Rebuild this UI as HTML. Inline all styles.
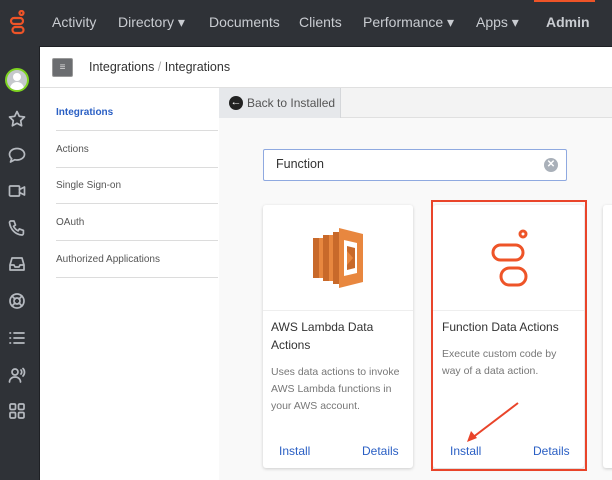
<!DOCTYPE html>
<html><head><meta charset="utf-8"><style>
*{margin:0;padding:0;box-sizing:border-box}
body{width:612px;height:480px;overflow:hidden;background:#2f3237;font-family:"Liberation Sans",sans-serif;position:relative}
.a{position:absolute}
.nav{color:#c9ccd1;font-size:14px;top:14px}
.rail svg{position:absolute;left:8px;width:18px;height:18px;fill:none;stroke:#b6bac0;stroke-width:1.7;stroke-linecap:round;stroke-linejoin:round}
.ln{position:absolute;left:56px;font-size:10px;color:#555}
.dv{position:absolute;left:56px;width:162px;height:1px;background:#dcdcdc}
.card{position:absolute;background:#fff;border-radius:3px;box-shadow:0 1px 3px rgba(0,0,0,.18)}
.t{position:absolute;font-size:12px;color:#333;line-height:18px}
.d{position:absolute;font-size:10.5px;color:#777;line-height:17px}
.lk{position:absolute;font-size:12px;color:#2a5fc4}
</style></head><body>
<!-- top bar -->
<svg class="a" style="left:9px;top:10px" width="16" height="26" viewBox="0 0 16 26"><g fill="none" stroke="#ee5428" stroke-width="2.2"><circle cx="12.5" cy="3" r="2"/><rect x="2" y="8" width="12" height="6" rx="3"/><rect x="3.5" y="17" width="11" height="6" rx="3"/></g></svg>
<div class="a nav" style="left:52px">Activity</div>
<div class="a nav" style="left:118px">Directory ▾</div>
<div class="a nav" style="left:209px">Documents</div>
<div class="a nav" style="left:299px">Clients</div>
<div class="a nav" style="left:363px">Performance ▾</div>
<div class="a nav" style="left:476px">Apps ▾</div>
<div class="a nav" style="left:546px;font-weight:bold">Admin</div>
<div class="a" style="left:534px;top:0;width:61px;height:2px;background:#ee5428"></div>
<!-- rail -->
<div class="a" style="left:5px;top:68px;width:24px;height:24px;border-radius:50%;border:2.5px solid #7ed321;background:#c5c8cc;overflow:hidden"><div class="a" style="left:6px;top:3px;width:8px;height:8px;border-radius:50%;background:#fff"></div><div class="a" style="left:3px;top:12px;width:14px;height:10px;border-radius:7px 7px 0 0;background:#fff"></div></div>
<div class="rail">
<svg style="top:110px" viewBox="0 0 18 18"><path d="M9 1.5l2.3 4.8 5.2.7-3.8 3.6.9 5.2L9 13.3l-4.6 2.5.9-5.2L1.5 7l5.2-.7z"/></svg>
<svg style="top:146px" viewBox="0 0 18 18"><path d="M9 2.5c4.2 0 7.5 2.6 7.5 5.8S13.2 14 9 14c-.8 0-1.6-.1-2.3-.3L2.5 16l1.2-3.3C2.3 11.6 1.5 10 1.5 8.3 1.5 5.1 4.8 2.5 9 2.5z"/></svg>
<svg style="top:182px" viewBox="0 0 18 18"><rect x="1.5" y="4" width="10" height="10" rx="1"/><path d="M11.5 7.5l5-2.5v8l-5-2.5"/></svg>
<svg style="top:219px" viewBox="0 0 18 18"><path d="M3 2h3l1.5 4-2 1.3c1 2 2.6 3.6 4.6 4.6l1.3-2 4 1.5v3c0 .8-.7 1.6-1.5 1.6C7.5 15.6 2.4 10.5 1.5 3.5 1.5 2.7 2.2 2 3 2z"/></svg>
<svg style="top:255px" viewBox="0 0 18 18"><path d="M2 10l2-7h10l2 7v5H2z M2 10h4l1 2h4l1-2h4"/></svg>
<svg style="top:292px" viewBox="0 0 18 18"><circle cx="9" cy="9" r="7"/><circle cx="9" cy="9" r="3"/><path d="M4 4l3 3M14 4l-3 3M4 14l3-3M14 14l-3-3"/></svg>
<svg style="top:329px" viewBox="0 0 18 18"><path d="M6 4h10M6 9h10M6 14h10M2 4h.5M2 9h.5M2 14h.5"/></svg>
<svg style="top:366px" viewBox="0 0 18 18"><circle cx="7" cy="6" r="3"/><path d="M1.5 16c0-3 2.5-5 5.5-5s5.5 2 5.5 5M13 4c1 1 1 3 0 4M15 2.5c2 2 2 5.5 0 7.5"/></svg>
<svg style="top:402px" viewBox="0 0 18 18"><rect x="2" y="2" width="5.5" height="5.5" rx="1.2"/><rect x="10.5" y="2" width="5.5" height="5.5" rx="1.2"/><rect x="2" y="10.5" width="5.5" height="5.5" rx="1.2"/><rect x="10.5" y="10.5" width="5.5" height="5.5" rx="1.2"/></svg>
</div>
<!-- main -->
<div class="a" style="left:39px;top:46px;width:573px;height:434px;background:#fff;border-top:1px solid #1e2024;border-left:1px solid #1e2024"></div>
<div class="a" style="left:52px;top:58px;width:21px;height:19px;background:#6b6d70;border:1px solid #999;border-radius:2px;color:#ddd;font-size:10px;text-align:center;line-height:17px">≡</div>
<div class="a" style="left:89px;top:60px;font-size:12.5px;color:#333">Integrations <span style="color:#aaa">/</span> Integrations</div>
<div class="a" style="left:40px;top:87px;width:572px;height:1px;background:#e0e0e0"></div>
<!-- left nav -->
<div class="ln" style="top:107px;color:#2a5fc4;font-weight:bold">Integrations</div>
<div class="dv" style="top:130px"></div>
<div class="ln" style="top:144px">Actions</div>
<div class="dv" style="top:167px"></div>
<div class="ln" style="top:180px">Single Sign-on</div>
<div class="dv" style="top:203px"></div>
<div class="ln" style="top:217px">OAuth</div>
<div class="dv" style="top:240px"></div>
<div class="ln" style="top:254px">Authorized Applications</div>
<div class="dv" style="top:277px"></div>
<!-- right pane -->
<div class="a" style="left:219px;top:88px;width:393px;height:392px;background:#f9f9f9"></div>
<div class="a" style="left:219px;top:88px;width:393px;height:30px;background:#f3f3f3;border-bottom:1px solid #e0e0e0"></div>
<div class="a" style="left:219px;top:88px;width:122px;height:30px;background:#e6e8eb;border-right:1px solid #d5d7da"></div>
<div class="a" style="left:229px;top:96px;width:14px;height:14px;border-radius:50%;background:#222;color:#fff;font-size:11px;line-height:13px;text-align:center;font-weight:bold">←</div>
<div class="a" style="left:247px;top:96px;font-size:12px;color:#555">Back to Installed</div>
<div class="a" style="left:263px;top:149px;width:304px;height:32px;background:#fff;border:1px solid #8fa9e0;border-radius:2px"></div>
<div class="a" style="left:276px;top:157px;font-size:12.5px;color:#333">Function</div>
<div class="a" style="left:544px;top:158px;width:14px;height:14px;border-radius:50%;background:#a9b0b9;color:#fff;font-size:10px;line-height:14px;text-align:center;font-weight:bold">✕</div>
<!-- card 1 -->
<div class="card" style="left:263px;top:205px;width:150px;height:263px"></div>
<div class="a" style="left:263px;top:310px;width:150px;height:1px;background:#eee"></div>
<svg class="a" style="left:313px;top:228px" width="50" height="60" viewBox="0 0 50 60"><path d="M0 10h6v40H0z" fill="#c8692a"/><path d="M6 10h4v40H6z" fill="#e8873f"/><path d="M10 7h6v46h-6z" fill="#c8692a"/><path d="M16 7h4v46h-4z" fill="#e8873f"/><path d="M20 4h6v52h-6z" fill="#c8692a"/><path d="M26 0l24 6v48l-24 6z" fill="#e8873f"/><path d="M31 12l13 3v30l-13 3z" fill="#fff"/><path d="M34 18l8 2v20l-8 2z" fill="#c8692a"/><path d="M34 23l6 7-6 7z" fill="#e8873f"/></svg>
<div class="t" style="left:271px;top:318px">AWS Lambda Data<br>Actions</div>
<div class="d" style="left:271px;top:364px">Uses data actions to invoke<br>AWS Lambda functions in<br>your AWS account.</div>
<div class="lk" style="left:279px;top:444px">Install</div>
<div class="lk" style="left:362px;top:444px">Details</div>
<!-- card 2 -->
<div class="card" style="left:433px;top:205px;width:151px;height:263px"></div>
<div class="a" style="left:433px;top:310px;width:151px;height:1px;background:#eee"></div>
<div class="a" style="left:431px;top:200px;width:156px;height:271px;border:2px solid #e9442a"></div>
<svg class="a" style="left:491px;top:229px" width="38" height="59" viewBox="0 0 38 59"><g fill="none" stroke="#ee5428" stroke-width="3"><circle cx="32" cy="5" r="3"/><rect x="2" y="16" width="30" height="15" rx="7.5"/><rect x="10" y="39" width="25" height="17" rx="8.5"/></g></svg>
<div class="t" style="left:442px;top:318px">Function Data Actions</div>
<div class="d" style="left:442px;top:346px">Execute custom code by<br>way of a data action.</div>
<div class="lk" style="left:450px;top:444px">Install</div>
<div class="lk" style="left:533px;top:444px">Details</div>
<svg class="a" style="left:464px;top:402px" width="56" height="42" viewBox="0 0 56 42"><path d="M54 1L8 36" stroke="#e9442a" stroke-width="2" fill="none"/><path d="M3 40l4-11 6 7z" fill="#e9442a"/></svg>
<!-- card 3 partial -->
<div class="card" style="left:603px;top:205px;width:30px;height:263px"></div>
</body></html>
